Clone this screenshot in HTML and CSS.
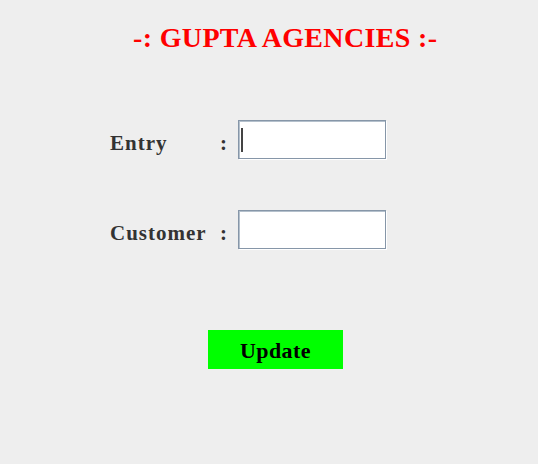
FILE: index.html
```html
<!DOCTYPE html>
<html>
<head>
<meta charset="utf-8">
<link rel="stylesheet" href="styles.css">
</head>
<body>
<div class="page">
  <h1 class="title">-: GUPTA AGENCIES :-</h1>
  <div class="form">
    <div class="row">
      <span class="label">Entry</span>
      <span class="colon">:</span>
      <div class="field"><span class="caret"></span></div>
    </div>
    <div class="row row2">
      <span class="label">Customer</span>
      <span class="colon">:</span>
      <div class="field"></div>
    </div>
  </div>
  <div class="actions">
    <button class="btn">Update</button>
  </div>
</div>
</body>
</html>
```
FILE: styles.css
```css
html, body {
  margin: 0;
  padding: 0;
  background: #eeeeee;
}
.page {
  width: 538px;
  height: 464px;
  overflow: hidden;
  font-family: "Liberation Serif", "DejaVu Serif", serif;
}
.title {
  margin: 0;
  padding-top: 22px;
  padding-left: 133px;
  font-size: 28px;
  line-height: 32px;
  font-weight: bold;
  color: #ff0000;
  letter-spacing: 0.35px;
}
.form {
  padding-left: 110px;
  padding-top: 66px;
}
.row {
  display: flex;
  align-items: center;
  height: 39px;
}
.row2 {
  margin-top: 51px;
}
.label {
  width: 111px;
  padding-top: 7px;
  font-size: 21px;
  font-weight: bold;
  color: #333333;
  letter-spacing: 1px;
}
.colon {
  width: 17px;
  padding-top: 7px;
  margin-left: -1px;
  font-size: 21px;
  font-weight: bold;
  color: #333333;
}
.field {
  box-sizing: border-box;
  width: 148px;
  height: 39px;
  margin-left: 1px;
  background: #ffffff;
  border: 1px solid #8696a8;
  box-shadow: inset 1px 1px 0 #b4c0cc, 1px 1px 0 #ffffff;
  display: flex;
  align-items: center;
  padding-left: 2px;
}
.caret {
  display: block;
  width: 2px;
  height: 24px;
  background: #444444;
}
.actions {
  padding-left: 208px;
  padding-top: 81px;
}
.btn {
  box-sizing: border-box;
  width: 135px;
  height: 39px;
  margin: 0;
  padding: 2px 0 0 0;
  border: none;
  background: #00ff00;
  font-family: "Liberation Serif", "DejaVu Serif", serif;
  font-size: 22px;
  font-weight: bold;
  color: #000000;
  letter-spacing: 0.4px;
}
```
